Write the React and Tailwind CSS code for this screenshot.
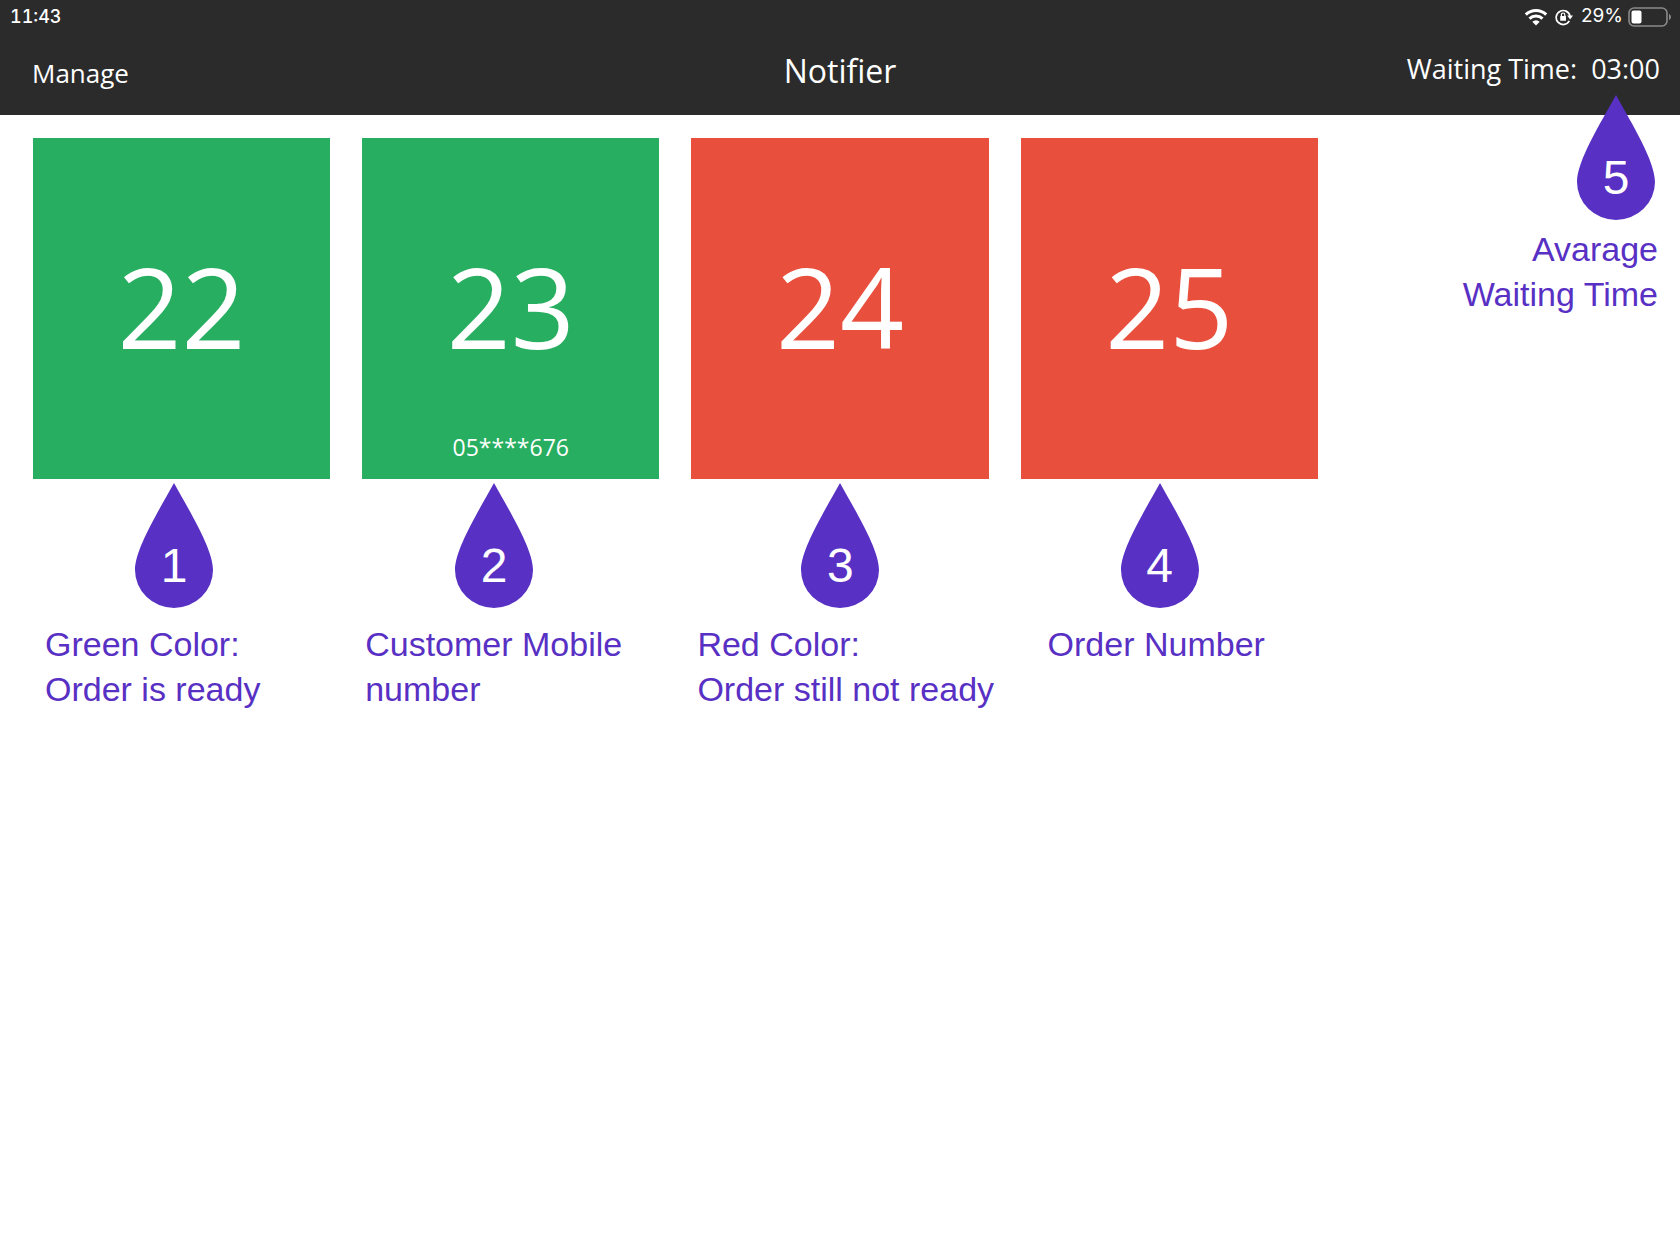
import clsx from "clsx";

const orders = [
  { number: 22, ready: true },
  { number: 23, ready: true, phone: "05****676" },
  { number: 24, ready: false },
  { number: 25, ready: false },
];

const notes = [
  { id: 1, lines: ["Green Color:", "Order is ready"], pin: "ml-[102px]", text: "ml-[12px]" },
  { id: 2, lines: ["Customer Mobile", "number"], pin: "ml-[93px]", text: "ml-[3px]" },
  { id: 3, lines: ["Red Color:", "Order still not ready"], pin: "ml-[110px]", text: "ml-[6px]" },
  { id: 4, lines: ["Order Number"], pin: "ml-[100px]", text: "ml-[27px]" },
];

/* =============================
    STATUS BAR ICONS
============================== */

function WifiIcon() {
  return (
    <svg width="24" height="18" viewBox="0 0 24 18" fill="none" stroke="white" strokeWidth="3">
      <path d="M1.8 6.6a14.6 14.6 0 0 1 20.4 0" />
      <path d="M5.5 10.7a9.4 9.4 0 0 1 13 0" />
      <path d="M12 17.5 8.3 13.8a5.3 5.3 0 0 1 7.4 0z" fill="white" stroke="none" />
    </svg>
  );
}

function RotationLockIcon() {
  return (
    <svg width="18" height="18" viewBox="0 0 18 18" fill="none" stroke="white">
      <path d="M14.3 12.9A7 7 0 1 1 15 8" strokeWidth="1.7" />
      <path d="M12.2 7.4H18l-2.9 4z" fill="white" stroke="none" />
      <rect x="5.2" y="8" width="5.8" height="4.8" rx="0.6" fill="white" stroke="none" />
      <path d="M6.4 8.4V6.7a1.7 1.7 0 0 1 3.4 0v1.7" strokeWidth="1.2" />
    </svg>
  );
}

function BatteryIcon() {
  return (
    <svg width="44" height="20" viewBox="0 0 44 20">
      <rect x="1" y="1" width="38" height="18" rx="5" fill="none" stroke="#8a8a8a" strokeWidth="1.6" />
      <rect x="3.5" y="3.5" width="10" height="13" rx="2" fill="white" />
      <path d="M41 7c2.6.8 2.6 5.2 0 6z" fill="#8a8a8a" />
    </svg>
  );
}

function Pin({ number, className }) {
  return (
    <div className={clsx("relative w-[78px]", className)}>
      <svg className="block" width="78" height="125" viewBox="0 0 78 125">
        <path d="M39 0C55 29 78 66 78 87a39 38 0 0 1-78 0C0 66 23 29 39 0z" fill="#5830c4" />
      </svg>
      <span className="absolute inset-x-0 top-[59px] text-center text-[48px] leading-[48px] text-white">
        {number}
      </span>
    </div>
  );
}

export default function App() {
  return (
    <div className="min-h-screen bg-white font-['Open_Sans',sans-serif] text-white">

      {/* ===== HEADER ===== */}
      <header className="bg-[#2b2b2b] pb-[6px]">
        <div className="flex h-[33px] items-center justify-between pl-2.5 pr-2 font-['Inter',sans-serif] text-[19px]">
          <span className="text-[18px] font-medium tabular-nums">11:43</span>
          <div className="flex items-center">
            <WifiIcon />
            <span className="ml-[7px]">
              <RotationLockIcon />
            </span>
            <span className="ml-2 mr-[5px]">29%</span>
            <BatteryIcon />
          </div>
        </div>

        <div className="grid h-[76px] grid-cols-3 items-center px-5">
          <button type="button" className="justify-self-start pl-3 pt-1 text-[26px] leading-9">
            Manage
          </button>
          <h1 className="text-center text-[32px] leading-10">Notifier</h1>
          <div className="relative justify-self-end pb-1 text-[27px] leading-9">
            Waiting Time:&nbsp; 03:00
            <div className="absolute right-0 top-full flex flex-col items-end pr-0.5 pt-1 text-right font-['Liberation_Sans',sans-serif] text-[34px] leading-[45px] text-[#5830c4]">
              <Pin number={5} className="mr-[3px]" />
              <p className="whitespace-nowrap pt-[7px]">
                Avarage
                <br />
                Waiting Time
              </p>
            </div>
          </div>
        </div>
      </header>

      <main className="px-[33px] pt-[23px]">
        {/* ===== ORDERS ===== */}
        <div className="grid grid-cols-5 gap-8">
          {orders.map((order) => (
            <div
              key={order.number}
              className={clsx(
                "relative flex aspect-[297/341] items-center justify-center",
                order.ready ? "bg-[#27ae60]" : "bg-[#e94f3d]"
              )}
            >
              <span className="pb-1.5 text-[112px] leading-none">{order.number}</span>
              {order.phone && (
                <span className="absolute inset-x-0 bottom-3 text-center text-[23px] leading-10">
                  {order.phone}
                </span>
              )}
            </div>
          ))}
        </div>

        {/* ===== NOTES ===== */}
        <div className="grid grid-cols-5 gap-8 pt-1 font-['Liberation_Sans',sans-serif] text-[34px] leading-[45px] text-[#5830c4]">
          {notes.map((note) => (
            <div key={note.id}>
              <Pin number={note.id} className={note.pin} />
              <p className={clsx("whitespace-nowrap pt-[14px]", note.text)}>
                {note.lines.map((line) => (
                  <span key={line} className="block">{line}</span>
                ))}
              </p>
            </div>
          ))}
        </div>
      </main>

    </div>
  );
}
